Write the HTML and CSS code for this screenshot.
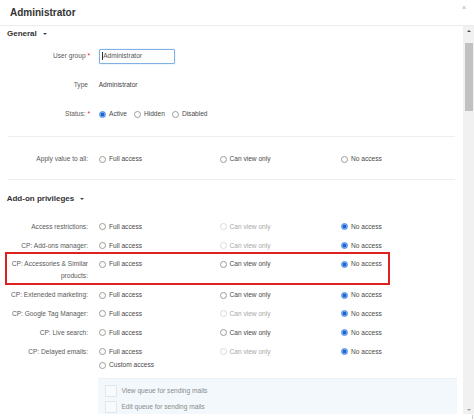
FILE: index.html
```html
<!DOCTYPE html>
<html>
<head>
<meta charset="utf-8">
<link rel="stylesheet" href="styles.css">
</head>
<body>
<div class="dialog">
  <header class="dlg-head">
    <h1 class="title">Administrator</h1>
    <span class="close">×</span>
  </header>
  <div class="dlg-body">
    <div class="content">
      <h2 class="section sec-general">General <span class="caret"></span></h2>

      <div class="field gen">
        <div class="lbl req">User group <span class="star">*</span></div>
        <div class="ctrl"><div class="input"><span class="cursor"></span>Administrator</div></div>
      </div>
      <div class="field gen">
        <div class="lbl">Type</div>
        <div class="ctrl value">Administrator</div>
      </div>
      <div class="field gen last">
        <div class="lbl req">Status: <span class="star">*</span></div>
        <div class="ctrl opts">
          <span class="opt"><span class="radio on"></span>Active</span>
          <span class="opt"><span class="radio"></span>Hidden</span>
          <span class="opt"><span class="radio"></span>Disabled</span>
        </div>
      </div>

      <div class="sep sep1"></div>

      <div class="field apply">
        <div class="lbl">Apply value to all:</div>
        <div class="opt"><span class="radio"></span>Full access</div>
        <div class="opt"><span class="radio"></span>Can view only</div>
        <div class="opt"><span class="radio"></span>No access</div>
      </div>

      <div class="sep sep2"></div>

      <h2 class="section sec-addon">Add-on privileges <span class="caret"></span></h2>

      <div class="field priv">
        <div class="lbl">Access restrictions:</div>
        <div class="opt"><span class="radio"></span>Full access</div>
        <div class="opt dis"><span class="radio"></span>Can view only</div>
        <div class="opt"><span class="radio on"></span>No access</div>
      </div>
      <div class="field priv">
        <div class="lbl">CP: Add-ons manager:</div>
        <div class="opt"><span class="radio"></span>Full access</div>
        <div class="opt dis"><span class="radio"></span>Can view only</div>
        <div class="opt"><span class="radio on"></span>No access</div>
      </div>
      <div class="field priv hl">
        <div class="lbl">CP: Accessories &amp; Similar products:</div>
        <div class="opt"><span class="radio"></span>Full access</div>
        <div class="opt"><span class="radio"></span>Can view only</div>
        <div class="opt"><span class="radio on"></span>No access</div>
      </div>
      <div class="field priv">
        <div class="lbl">CP: Exteneded marketing:</div>
        <div class="opt"><span class="radio"></span>Full access</div>
        <div class="opt"><span class="radio"></span>Can view only</div>
        <div class="opt"><span class="radio on"></span>No access</div>
      </div>
      <div class="field priv">
        <div class="lbl">CP: Google Tag Manager:</div>
        <div class="opt"><span class="radio"></span>Full access</div>
        <div class="opt dis"><span class="radio"></span>Can view only</div>
        <div class="opt"><span class="radio on"></span>No access</div>
      </div>
      <div class="field priv">
        <div class="lbl">CP: Live search:</div>
        <div class="opt"><span class="radio"></span>Full access</div>
        <div class="opt"><span class="radio"></span>Can view only</div>
        <div class="opt"><span class="radio on"></span>No access</div>
      </div>
      <div class="field priv">
        <div class="lbl">CP: Delayed emails:</div>
        <div class="stack">
          <div class="opt"><span class="radio"></span>Full access</div>
          <div class="opt"><span class="radio"></span>Custom access</div>
        </div>
        <div class="opt dis"><span class="radio"></span>Can view only</div>
        <div class="opt"><span class="radio on"></span>No access</div>
      </div>

      <div class="field custom">
        <div class="custom-box">
          <div class="chk-item"><span class="chk"></span>View queue for sending mails</div>
          <div class="chk-item"><span class="chk"></span>Edit queue for sending mails</div>
        </div>
      </div>
    </div>
    <div class="scrollbar">
      <div class="sb-btn sb-up"><span class="tri-up"></span></div>
      <div class="sb-gap"></div>
      <div class="sb-thumb"></div>
      <div class="sb-fill"></div>
      <div class="sb-btn sb-down"><span class="tri-down"></span></div>
    </div>
  </div>
  <div class="dlg-foot"><span class="grip"></span></div>
</div>
</body>
</html>
```
FILE: styles.css
```css
* { box-sizing: border-box; }
html, body { margin: 0; padding: 0; background: #fff; }
body {
  font-family: "Liberation Sans", Arial, sans-serif;
  font-size: 6.6px;
  line-height: 12px;
  color: #444;
  width: 474px;
  height: 420px;
  overflow: hidden;
}
.dialog { width: 474px; height: 420px; display: flex; flex-direction: column; }

.dlg-head {
  height: 26px;
  flex: none;
  display: flex;
  justify-content: space-between;
  align-items: flex-start;
  border-bottom: 1px solid #ececec;
  padding: 0 8px 0 10px;
}
.title {
  margin: 0;
  font-size: 10px;
  font-weight: bold;
  line-height: 25px;
  color: #333;
}
.close {
  font-size: 7px;
  line-height: 7px;
  margin-top: 3.5px;
  color: #b0b0b0;
}

.dlg-body {
  height: 388px;
  flex: none;
  display: flex;
  overflow: hidden;
}
.content {
  flex: 1;
  padding: 2.5px 6px 0 6px;
  overflow: hidden;
}

.section {
  margin: 0;
  font-size: 8px;
  font-weight: bold;
  line-height: 10px;
  height: 10px;
  color: #333;
  display: flex;
  align-items: center;
  padding-left: 1px;
}
.sec-general { margin-bottom: 10px; }
.sec-addon { margin-top: 13.7px; margin-bottom: 17.1px; padding-left: 0.7px; }
.caret {
  display: inline-block;
  width: 0; height: 0;
  margin-left: 6px;
  border-left: 2px solid transparent;
  border-right: 2px solid transparent;
  border-top: 2.5px solid #444;
}

.field {
  display: grid;
  grid-template-columns: 92.5px 120.5px 121.5px 1fr;
  column-gap: 0;
}
.field > .ctrl { grid-column: 2 / 5; }
.lbl {
  text-align: right;
  color: #5a5a5a;
  padding-right: 10.5px;
}
.lbl.req { padding-right: 8.5px; }
.star { color: #d22; }

.gen { height: 15px; align-items: center; margin-bottom: 14px; }
.gen.last { margin-bottom: 14.5px; }
.input {
  width: 76.5px;
  height: 15.3px;
  border: 1px solid #7fb1e3;
  box-shadow: 0 0 1.5px rgba(102,170,230,0.5);
  border-radius: 1px;
  padding-left: 2.5px;
  display: flex;
  align-items: center;
  color: #555;
  margin-left: 0.2px;
}
.cursor {
  display: inline-block;
  width: 0.7px;
  height: 8px;
  background: #333;
  margin-right: 0.3px;
}
.value { color: #444; padding-left: 0.2px; }

.opts { display: flex; align-items: center; }
.opts .opt { margin-right: 6.5px; }
.opt {
  display: flex;
  align-items: center;
  gap: 3px;
  color: #4a4a4a;
  white-space: nowrap;
  height: 12px;
}
.opt.dis { color: #a8a8a8; }
.radio {
  flex: none;
  display: inline-block;
  width: 7px;
  height: 7px;
  border-radius: 50%;
  border: 1px solid #9c9c9c;
  background: #fff;
  margin-left: 0.5px;
}
.opt.dis .radio { border-color: #dadada; }
.radio.on {
  border-color: #4d8fe4;
  background: radial-gradient(circle, #1d63d0 0 1.4px, #7aaef0 2.1px, #5d9ae8 100%);
}

.sep {
  height: 1px;
  background: #efefef;
  margin: 0 2px;
}
.sep1 { margin-bottom: 14.5px; }
.apply { height: 15px; align-items: center; margin-bottom: 12.5px; }

.priv { margin-bottom: 6.8px; align-items: start; }
.priv .lbl { line-height: 12px; }
.stack { display: flex; flex-direction: column; gap: 1.8px; }

.hl { position: relative; }
.hl::after {
  content: "";
  position: absolute;
  top: -6.4px;
  bottom: -2.6px;
  left: -1px;
  right: 67px;
  border: 2px solid #dd2020;
  pointer-events: none;
}

.custom { margin-bottom: 0; }
.custom-box {
  grid-column: 2 / 5;
  margin-left: -0.2px;
  background: #f3f8fc;
  border-top: 1px solid #eaf1f7;
  padding: 6.3px 0 8px 6.8px;
  height: 60px;
}
.chk-item {
  display: flex;
  align-items: center;
  gap: 4.3px;
  height: 12px;
  margin-bottom: 4px;
  color: #8a8a8a;
}
.chk {
  flex: none;
  width: 12px;
  height: 12px;
  border: 1px solid #e1e7ed;
  background: #f8fafc;
  border-radius: 1px;
}

.scrollbar {
  width: 11px;
  flex: none;
  background: #f1f1f1;
  display: flex;
  flex-direction: column;
}
.sb-btn {
  height: 9px;
  flex: none;
  display: flex;
  justify-content: center;
  align-items: center;
}
.tri-up {
  width: 0; height: 0;
  border-left: 2px solid transparent;
  border-right: 2px solid transparent;
  border-bottom: 2.5px solid #505050;
}
.tri-down {
  width: 0; height: 0;
  border-left: 2px solid transparent;
  border-right: 2px solid transparent;
  border-top: 2.5px solid #a0a0a0;
}
.sb-gap { height: 8px; flex: none; }
.sb-thumb {
  height: 67.7px;
  flex: none;
  margin: 0 1.5px 0 2.3px;
  background: #c1c1c1;
}
.sb-fill { flex: 1; }

.dlg-foot {
  flex: 1;
  display: flex;
  justify-content: flex-end;
  align-items: flex-start;
  padding-right: 1.5px;
}
.grip {
  width: 1px;
  height: 4px;
  margin-top: 1px;
  background: #c8c8c8;
}
```
